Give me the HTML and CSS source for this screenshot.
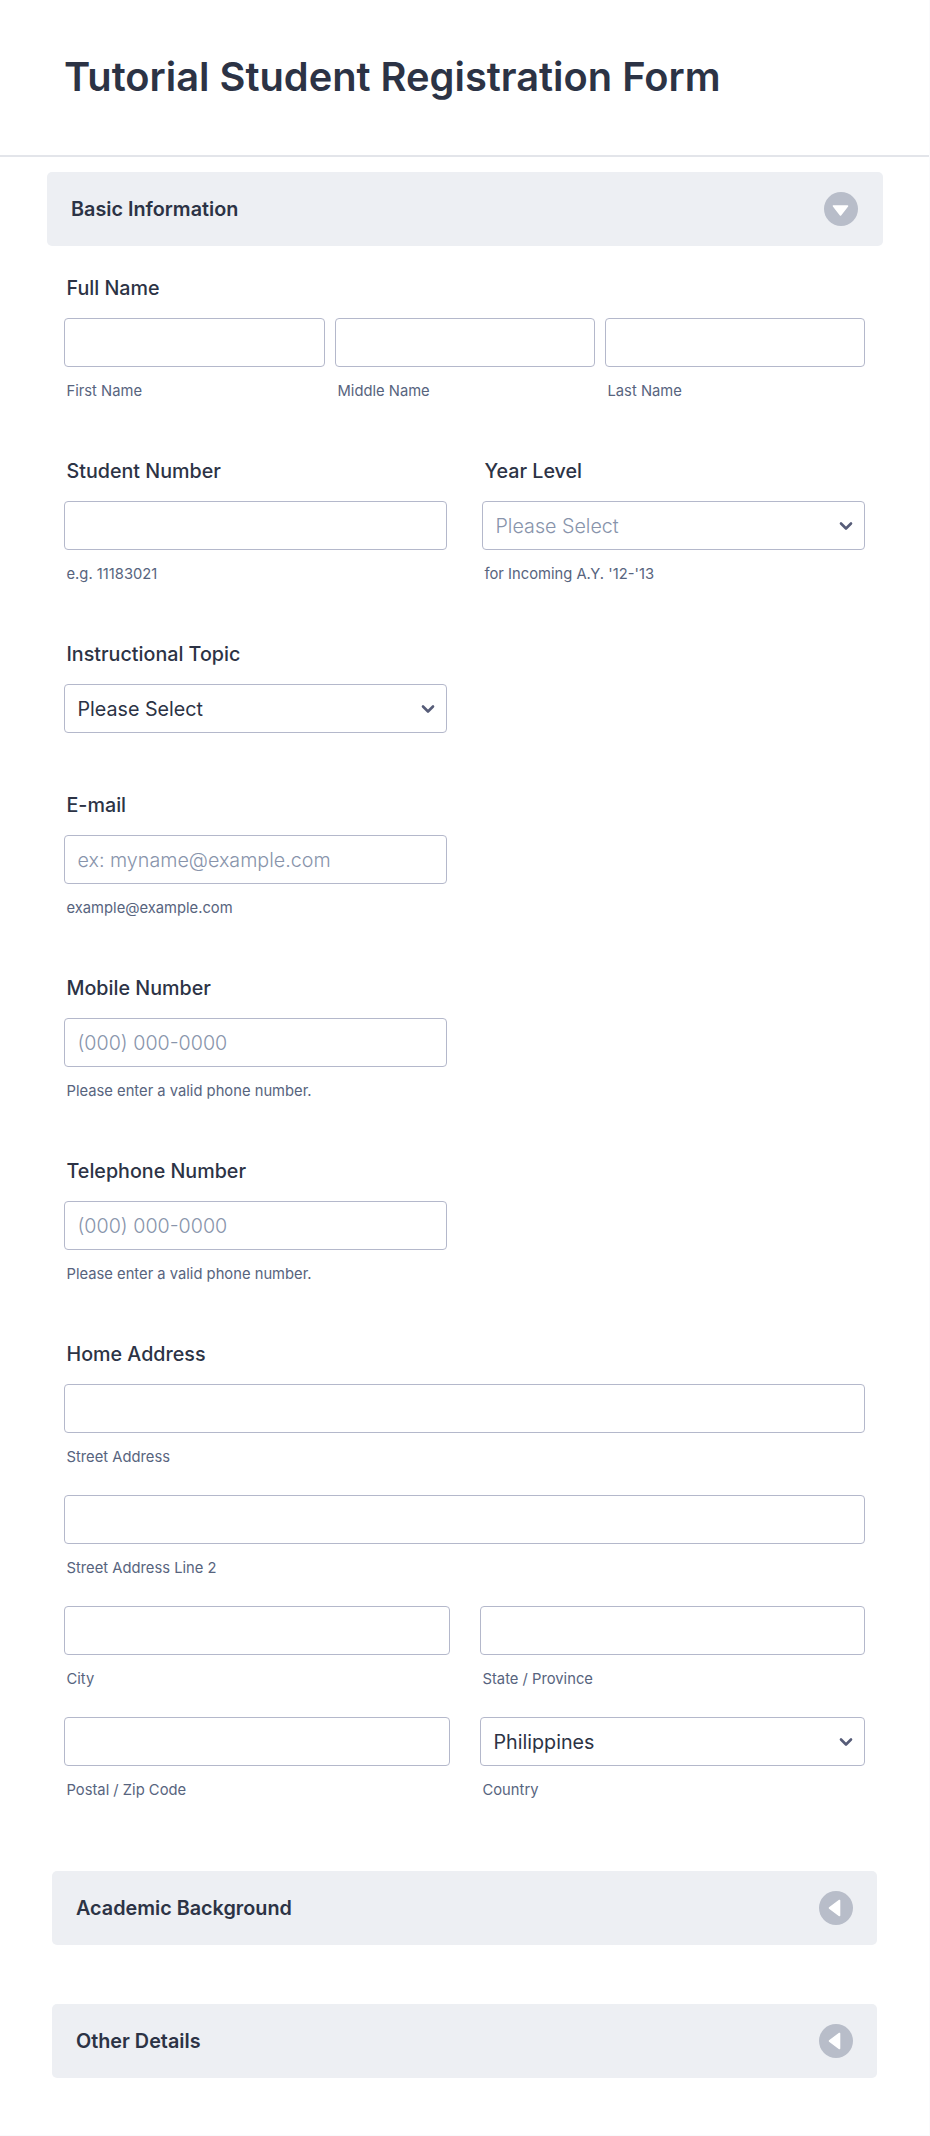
FILE: index.html
```html
<!DOCTYPE html>
<html>
<head>
    <title>Tutorial Student Registration Form</title>
    <link rel="stylesheet" href="styles.css">
</head>
<body>
    <form class="form">
        <div class="form-header">
            <h1>Tutorial Student Registration Form</h1>
        </div>

        <div class="section">
            <div class="collapse-bar">
                <h2>Basic Information</h2>
                <span class="collapse-icon">
                    <svg width="34" height="34" viewBox="0 0 34 34"><path d="M9.5 14h14l-7 9z" fill="#fff" stroke="#fff" stroke-width="1.6" stroke-linejoin="round"/></svg>
                </span>
            </div>

            <div class="fields">
                <div class="field">
                    <label>Full Name</label>
                    <div class="row row-name">
                        <div><input type="text"><span class="sub">First Name</span></div>
                        <div><input type="text"><span class="sub">Middle Name</span></div>
                        <div><input type="text"><span class="sub">Last Name</span></div>
                    </div>
                </div>

                <div class="row row-half">
                    <div class="field">
                        <label>Student Number</label>
                        <input type="text">
                        <span class="sub">e.g. 11183021</span>
                    </div>
                    <div class="field">
                        <label>Year Level</label>
                        <div class="select-wrap">
                            <select class="empty"><option>Please Select</option></select>
                            <svg class="chevron" width="14" height="10" viewBox="0 0 14 10"><path d="M2 2.5l5 5 5-5" fill="none" stroke="#565c78" stroke-width="2.6" stroke-linecap="round" stroke-linejoin="round"/></svg>
                        </div>
                        <span class="sub">for Incoming A.Y. '12-'13</span>
                    </div>
                </div>

                <div class="field half">
                    <label>Instructional Topic</label>
                    <div class="select-wrap">
                        <select><option>Please Select</option></select>
                        <svg class="chevron" width="14" height="10" viewBox="0 0 14 10"><path d="M2 2.5l5 5 5-5" fill="none" stroke="#565c78" stroke-width="2.6" stroke-linecap="round" stroke-linejoin="round"/></svg>
                    </div>
                </div>

                <div class="field half">
                    <label>E-mail</label>
                    <input type="text" placeholder="ex: myname@example.com">
                    <span class="sub">example@example.com</span>
                </div>

                <div class="field half">
                    <label>Mobile Number</label>
                    <input type="text" placeholder="(000) 000-0000">
                    <span class="sub">Please enter a valid phone number.</span>
                </div>

                <div class="field half">
                    <label>Telephone Number</label>
                    <input type="text" placeholder="(000) 000-0000">
                    <span class="sub">Please enter a valid phone number.</span>
                </div>

                <div class="field">
                    <label>Home Address</label>
                    <div class="address">
                        <div class="wide"><input type="text"><span class="sub">Street Address</span></div>
                        <div class="wide"><input type="text"><span class="sub">Street Address Line 2</span></div>
                        <div><input type="text"><span class="sub">City</span></div>
                        <div><input type="text"><span class="sub">State / Province</span></div>
                        <div><input type="text"><span class="sub">Postal / Zip Code</span></div>
                        <div>
                            <div class="select-wrap">
                                <select><option>Philippines</option></select>
                                <svg class="chevron" width="14" height="10" viewBox="0 0 14 10"><path d="M2 2.5l5 5 5-5" fill="none" stroke="#565c78" stroke-width="2.6" stroke-linecap="round" stroke-linejoin="round"/></svg>
                            </div>
                            <span class="sub">Country</span>
                        </div>
                    </div>
                </div>
            </div>
        </div>

        <div class="collapse-bar closed first-closed">
            <h2>Academic Background</h2>
            <span class="collapse-icon">
                <svg width="34" height="34" viewBox="0 0 34 34"><path d="M20.5 9.5v15l-10-7.5z" fill="#fff" stroke="#fff" stroke-width="1.6" stroke-linejoin="round"/></svg>
            </span>
        </div>

        <div class="collapse-bar closed">
            <h2>Other Details</h2>
            <span class="collapse-icon">
                <svg width="34" height="34" viewBox="0 0 34 34"><path d="M20.5 9.5v15l-10-7.5z" fill="#fff" stroke="#fff" stroke-width="1.6" stroke-linejoin="round"/></svg>
            </span>
        </div>
    </form>
</body>
</html>
```

FILE: styles.css
```css
* {
    box-sizing: border-box;
}
body {
    font-family: Inter, "Liberation Sans", sans-serif;
    background-color: #fff;
    color: #2c3345;
    margin: 0;
    padding: 0;
}
.form {
    height: 2136px;
    border-right: 1px solid #fafafc;
    border-bottom: 1px solid #fafafc;
    overflow: hidden;
}
.form-header {
    height: 157px;
    padding: 51px 64px 0;
    border-bottom: 2px solid #e3e5ea;
}
h1 {
    margin: 0;
    font-size: 39.8px;
    line-height: 51px;
    font-weight: 600;
}
h2 {
    margin: 0;
    font-size: 19.8px;
    line-height: 28px;
    font-weight: 600;
}
.section {
    margin: 15px 46px 0 47px;
}
.collapse-bar {
    display: flex;
    align-items: center;
    justify-content: space-between;
    height: 74px;
    padding: 0 25px 0 24px;
    background-color: #edeff3;
    border-radius: 5px;
}
.collapse-bar.closed {
    margin: 59px 52px 0;
    padding-right: 24px;
}
.collapse-bar.first-closed {
    margin-top: 73px;
}
.collapse-icon {
    display: block;
    width: 34px;
    height: 34px;
    background-color: #b8bdc9;
    border-radius: 50%;
}
.collapse-icon svg {
    display: block;
}
.fields {
    display: flex;
    flex-direction: column;
    gap: 60px;
    padding: 30px 17px 0;
}
.field label {
    display: block;
    margin-bottom: 18px;
    padding-left: 2.5px;
    font-size: 19.7px;
    line-height: 24px;
    font-weight: 500;
}
.half {
    width: 383px;
}
.row {
    display: grid;
}
.row-name {
    grid-template-columns: 261px 260px 260px;
    gap: 10px;
}
.row-half {
    grid-template-columns: 383px 383px;
    gap: 35px;
}
.address {
    display: grid;
    grid-template-columns: 386px 385px;
    gap: 30px;
}
.address .wide {
    grid-column: 1 / 3;
}
input,
select {
    display: block;
    width: 100%;
    height: 49px;
    padding: 0 12.5px;
    font-family: inherit;
    font-size: 19.7px;
    color: #2c3345;
    background-color: #fff;
    border: 1px solid #b4b8cb;
    border-radius: 4px;
    outline: none;
}
input::placeholder {
    color: #8894ab;
    opacity: 1;
    font-weight: 300;
}
select {
    appearance: none;
}
select.empty {
    color: #8894ab;
    font-weight: 300;
}
.select-wrap {
    position: relative;
}
.chevron {
    position: absolute;
    top: 20px;
    right: 12px;
}
.sub {
    display: block;
    margin-top: 16px;
    margin-bottom: -1px;
    padding-left: 2.5px;
    font-size: 14.75px;
    line-height: 17px;
    color: #57647e;
}
```
